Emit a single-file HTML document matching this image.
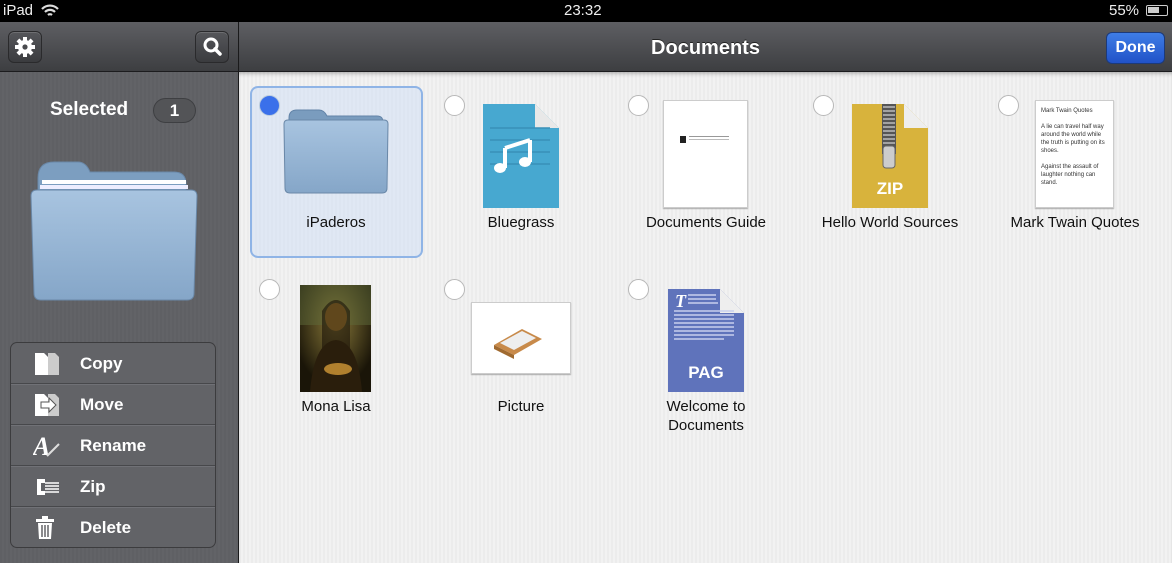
<!DOCTYPE html>
<html><head><style>
*{margin:0;padding:0;box-sizing:border-box}
body{width:1172px;height:563px;overflow:hidden;font-family:"Liberation Sans",sans-serif;position:relative;background:#000}
.abs{position:absolute}
.status{left:0;top:0;width:1172px;height:22px;background:#000;color:#eee;font-size:15px}
.tb{top:22px;height:50px;background:linear-gradient(#5e5f63,#3d3e41);border-bottom:1px solid #1c1c1e}
.side{left:0;top:72px;width:238px;height:491px;background:repeating-linear-gradient(90deg,#5f6064 0 2px,#626367 2px 4px)}
.main{left:239px;top:72px;width:933px;height:491px;background:repeating-linear-gradient(90deg,#ececec 0 2px,#f2f2f2 2px 4px);box-shadow:inset 0 4px 5px -3px rgba(0,0,0,.35)}
.btn{width:34px;height:32px;border:1px solid #2a2a2c;border-radius:6px;background:linear-gradient(#55565a,#3b3c3f);box-shadow:inset 0 1px 0 rgba(255,255,255,.15)}
.radio{width:21px;height:21px;border-radius:50%;background:#fff;border:1px solid #b8b8b8}
.lbl{font-size:15px;color:#111;text-align:center;width:180px;line-height:19px}
.menu{left:10px;top:342px;width:206px;height:206px;border:1px solid #3c3c3e;border-radius:7px;background:#626367;overflow:hidden}
.row{height:41px;border-bottom:1px solid #47484b;box-shadow:0 1px 0 #707176;color:#fff;font-weight:bold;font-size:17px;line-height:41px;padding-left:69px;position:relative}
.row svg{position:absolute;left:22px;top:9px}
</style></head><body>
<div class="abs status">
 <span class="abs" style="left:3px;top:2px">iPad</span>
 <svg class="abs" style="left:40px;top:3px" width="20" height="15" viewBox="0 0 20 15"><path d="M2 6a11 11 0 0 1 16 0M5 9a7 7 0 0 1 10 0M8 12a3 3 0 0 1 4 0" stroke="#ddd" stroke-width="2.2" fill="none"/></svg>
 <span class="abs" style="left:564px;top:2px">23:32</span>
 <span class="abs" style="left:1109px;top:2px">55%</span>
 <div class="abs" style="left:1146px;top:5px;width:22px;height:11px;border:1.5px solid #ccc;border-radius:2px"><div style="margin:1px;width:11px;height:6px;background:#ccc"></div></div>
</div>
<div class="abs tb" style="left:0;width:238px"></div>
<div class="abs" style="left:238px;top:22px;width:1px;height:541px;background:#1a1a1b"></div>
<div class="abs tb" style="left:239px;width:933px"></div>
<div class="abs btn" style="left:8px;top:31px"><svg width="32" height="30" viewBox="0 0 32 30"><g transform="translate(16,15)" fill="#fff"><circle r="7"/><g id="t"><rect x="-2" y="-10" width="4" height="20"/><rect x="-10" y="-2" width="20" height="4"/></g><use href="#t" transform="rotate(45)"/></g><circle cx="16" cy="15" r="2.6" fill="#4a4b4e"/></svg></div>
<div class="abs btn" style="left:195px;top:31px"><svg width="32" height="30" viewBox="0 0 32 30"><circle cx="15" cy="13" r="6" stroke="#fff" stroke-width="3" fill="none"/><path d="M19 17l5 5" stroke="#fff" stroke-width="3.5" stroke-linecap="round"/></svg></div>
<div class="abs" style="left:239px;top:37px;width:933px;text-align:center;color:#fff;font-weight:bold;font-size:20px;text-shadow:0 -1px 0 #222">Documents</div>
<div class="abs" style="left:1106px;top:32px;width:59px;height:32px;border-radius:6px;background:linear-gradient(#3f7de6,#2152c8);border:1px solid #1c3a7a;color:#fff;font-weight:bold;font-size:16px;text-align:center;line-height:30px">Done</div>
<div class="abs side"></div>
<div class="abs" style="left:50px;top:99px;color:#fff;font-weight:bold;font-size:19px">Selected</div>
<div class="abs" style="left:153px;top:98px;width:43px;height:25px;border-radius:13px;background:#535457;border:1px solid #3e3f42;color:#fff;font-weight:bold;font-size:17px;text-align:center;line-height:23px">1</div>
<svg class="abs" style="left:28px;top:158px" width="172" height="144" viewBox="0 0 172 144">
 <defs><linearGradient id="fg" x1="0" y1="0" x2="0" y2="1"><stop offset="0" stop-color="#a8c4e0"/><stop offset="1" stop-color="#85a6c8"/></linearGradient></defs>
 <path d="M10 20q0-16 16-16h24q8 0 12 10h84q12 0 12 12v10H10z" fill="#7c9ec0" stroke="#6a88a8"/>
 <rect x="14" y="22" width="144" height="4" fill="#fff"/>
 <rect x="12" y="27" width="148" height="4" fill="#eef"/>
 <path d="M3 38q0-6 6-6h154q6 0 6 6l-3 97q0 7-7 7H13q-7 0-7-7z" fill="url(#fg)" stroke="#6a88a8"/>
</svg>
<div class="abs menu">
 <div class="row"><svg width="28" height="24" viewBox="0 0 28 24"><path d="M2 1h9l4 4v18H2z" fill="#fff"/><path d="M15 1h7l4 4v18H15z" fill="#ccc"/></svg>Copy</div>
 <div class="row"><svg width="28" height="24" viewBox="0 0 28 24"><path d="M2 1h9l4 4v18H2z" fill="#fff"/><path d="M15 1h7l4 4v18H15z" fill="#ccc"/><path d="M8 9h8v-4l7 7-7 7v-4H8z" fill="#fff" stroke="#555"/></svg>Move</div>
 <div class="row"><svg width="28" height="24" viewBox="0 0 28 24"><text x="0" y="21" font-family="Liberation Serif" font-style="italic" font-weight="bold" font-size="26" fill="#fff">A</text><path d="M14 22l12-12" stroke="#ddd" stroke-width="2"/></svg>Rename</div>
 <div class="row"><svg width="28" height="24" viewBox="0 0 28 24"><path d="M4 4h8v4H8v8h4v4H4z" fill="#fff"/><path d="M12 8h14M12 11h14M12 14h14M12 17h14" stroke="#fff" stroke-width="1.6"/></svg>Zip</div>
 <div class="row" style="border:none;box-shadow:none"><svg width="28" height="24" viewBox="0 0 28 24"><rect x="3" y="3" width="18" height="3" fill="#fff"/><rect x="9" y="0" width="6" height="3" fill="#fff"/><path d="M5 7h14l-1 16H6z" fill="#fff"/><path d="M9 9v12M12 9v12M15 9v12" stroke="#626367" stroke-width="1.5"/></svg>Delete</div>
</div>
<div class="abs main"></div>
<div class="abs" style="left:250px;top:86px;width:173px;height:172px;border:2px solid #8fb4e6;border-radius:8px;background:rgba(205,222,245,.5)"></div>
<svg class="abs" style="left:283px;top:104px" width="106" height="90" viewBox="0 0 106 90"><path d="M6 14q0-8 8-8h22q5 0 8 6h50q6 0 6 6v12H6z" fill="#7a9cbe" stroke="#6384a8"/><path d="M1 20q0-4 4-4h96q4 0 4 4l-1 64q0 5-5 5H7q-5 0-5-5z" fill="url(#fg)" stroke="#6a88a8"/></svg>
<div class="abs radio" style="left:259px;top:95px;background:#3a70ea;border-color:#bcd"></div>
<div class="abs lbl" style="left:246px;top:213px">iPaderos</div>
<div class="abs radio" style="left:444px;top:95px"></div>
<svg class="abs" style="left:483px;top:104px" width="76" height="104" viewBox="0 0 76 104"><path d="M0 0h52l24 24v80H0z" fill="#47a8d0"/><path d="M52 0v24h24z" fill="#e8e8e8"/><path d="M7 24h60M7 36h60M7 48h60M7 60h60" stroke="#3990b8" stroke-width="1.5"/><path d="M22 44v20M47 36v22M22 44l25-8" stroke="#fff" stroke-width="4" fill="none"/><ellipse cx="17" cy="64" rx="6" ry="5" fill="#fff"/><ellipse cx="42" cy="58" rx="6" ry="5" fill="#fff"/></svg>
<div class="abs lbl" style="left:431px;top:213px">Bluegrass</div>
<div class="abs radio" style="left:628px;top:95px"></div>
<div class="abs" style="left:663px;top:100px;width:85px;height:108px;background:#fff;border:1px solid #ccc;box-shadow:0 1px 1px #aaa"><div style="position:absolute;left:16px;top:35px;width:6px;height:7px;background:#222"></div><div style="position:absolute;left:25px;top:35px;width:40px;border-top:1px solid #999;border-bottom:1px solid #bbb;height:4px"></div></div>
<div class="abs lbl" style="left:616px;top:213px">Documents Guide</div>
<div class="abs radio" style="left:813px;top:95px"></div>
<svg class="abs" style="left:852px;top:104px" width="76" height="104" viewBox="0 0 76 104"><path d="M0 0h52l24 24v80H0z" fill="#d8b33c"/><path d="M52 0v24h24z" fill="#eee"/><rect x="30" y="0" width="14" height="50" fill="#555"/><path d="M31 3h12M31 7h12M31 11h12M31 15h12M31 19h12M31 23h12M31 27h12M31 31h12M31 35h12M31 39h12" stroke="#bbb" stroke-width="1.5"/><rect x="31" y="42" width="12" height="22" rx="3" fill="#ccc" stroke="#666"/><text x="38" y="90" text-anchor="middle" font-family="Liberation Sans" font-weight="bold" font-size="17" fill="#fff">ZIP</text></svg>
<div class="abs lbl" style="left:800px;top:213px">Hello World Sources</div>
<div class="abs radio" style="left:998px;top:95px"></div>
<div class="abs" style="left:1035px;top:100px;width:79px;height:108px;background:#fff;border:1px solid #ccc;box-shadow:0 1px 1px #aaa;font-size:6px;line-height:8px;color:#333;padding:6px 5px">Mark Twain Quotes<br><br>A lie can travel half way around the world while the truth is putting on its shoes.<br><br>Against the assault of laughter nothing can stand.</div>
<div class="abs lbl" style="left:985px;top:213px">Mark Twain Quotes</div>
<div class="abs radio" style="left:259px;top:279px"></div>
<svg class="abs" style="left:300px;top:285px" width="71" height="107" viewBox="0 0 71 107"><defs><radialGradient id="ml" cx=".5" cy=".35" r=".6"><stop offset="0" stop-color="#8a7a3a"/><stop offset="1" stop-color="#1a1508"/></radialGradient></defs><rect width="71" height="107" fill="url(#ml)"/><rect y="0" width="71" height="40" fill="#5d6a3a" opacity=".5"/><ellipse cx="36" cy="32" rx="11" ry="14" fill="#c8963a"/><path d="M22 26q14-22 28 0v50H22z" fill="#1a1208" opacity=".6"/><path d="M10 107q4-50 26-52q22 2 26 52z" fill="#2a1e0c"/><ellipse cx="38" cy="84" rx="14" ry="6" fill="#b0802e"/></svg>
<div class="abs lbl" style="left:246px;top:397px">Mona Lisa</div>
<div class="abs radio" style="left:444px;top:279px"></div>
<div class="abs" style="left:471px;top:302px;width:100px;height:72px;background:#fff;border:1px solid #ccc;box-shadow:0 1px 1px #aaa"><svg width="100" height="72" viewBox="0 0 100 72"><path d="M22 42l28-16 20 10-28 16z" fill="#c88a4a"/><path d="M28 40l22-12 14 7-22 12z" fill="#eee"/><path d="M22 42l20 10v4l-20-10z" fill="#a06a30"/></svg></div>
<div class="abs lbl" style="left:431px;top:397px">Picture</div>
<div class="abs radio" style="left:628px;top:279px"></div>
<svg class="abs" style="left:668px;top:289px" width="76" height="103" viewBox="0 0 76 103"><path d="M0 0h52l24 24v79H0z" fill="#5f73bb"/><path d="M52 0v24h24z" fill="#eee"/><text x="7" y="18" font-family="Liberation Serif" font-style="italic" font-weight="bold" font-size="18" fill="#fff">T</text><g stroke="#c8d0ee" stroke-width="1.5"><path d="M20 6h28M20 10h28M20 14h30M6 22h60M6 26h60M6 30h60M6 34h60M6 38h60M6 42h60M6 46h60M6 50h50"/></g><text x="38" y="89" text-anchor="middle" font-family="Liberation Sans" font-weight="bold" font-size="17" fill="#fff">PAG</text></svg>
<div class="abs lbl" style="left:616px;top:397px">Welcome to<br>Documents</div>
</body></html>
